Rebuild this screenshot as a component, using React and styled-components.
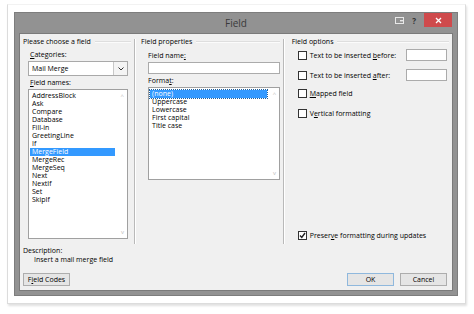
import React from 'react';
import styled, { createGlobalStyle } from 'styled-components';

const GlobalStyle = createGlobalStyle`
  html, body {
    margin: 0;
    background: #fff;
  }
  body {
    font-family: "Open Sans", "Noto Sans", sans-serif;
    font-size: 7px;
    color: #000;
  }
`;

const fieldNames = [
  'AddressBlock', 'Ask', 'Compare', 'Database', 'Fill-in', 'GreetingLine', 'If',
  'MergeField', 'MergeRec', 'MergeSeq', 'Next', 'NextIf', 'Set', 'SkipIf',
];
const formats = ['(none)', 'Uppercase', 'Lowercase', 'First capital', 'Title case'];

function App() {
  return (
    <>
      <GlobalStyle />
      <Page>
        <Frame>
          <Dialog>
            <TitleBar>
              <Title>Field</Title>
              <TitleTools>
                <svg width="9" height="7" viewBox="0 0 9 7">
                  <rect x="0.5" y="0.5" width="8" height="6" fill="none" stroke="#e8e8e8" />
                  <rect x="5" y="3" width="3" height="1.4" fill="#e8e8e8" />
                </svg>
                <Help>?</Help>
                <CloseBtn>
                  <svg width="7" height="7" viewBox="0 0 7 7">
                    <path d="M1 1 L6 6 M6 1 L1 6" stroke="#fff" strokeWidth="1.3" />
                  </svg>
                </CloseBtn>
              </TitleTools>
            </TitleBar>
            <Body>
              <Columns>
                <Column $width={113}>
                  <GroupTitle>Please choose a field</GroupTitle>
                  <Label $top={4}><u>C</u>ategories:</Label>
                  <Select>
                    <span>Mail Merge</span>
                    <DropBtn>
                      <svg width="6" height="4" viewBox="0 0 6 4">
                        <path d="M0.5 0.5 L3 3 L5.5 0.5" fill="none" stroke="#333" strokeWidth="1" />
                      </svg>
                    </DropBtn>
                  </Select>
                  <Label $top={2}><u>F</u>ield names:</Label>
                  <ListBox $height={150}>
                    {fieldNames.map((n) => (
                      <Item key={n} $selected={n === 'MergeField'}>{n}</Item>
                    ))}
                    <ScrollArrow $up>^</ScrollArrow>
                    <ScrollArrow>v</ScrollArrow>
                  </ListBox>
                </Column>
                <Separator />
                <Column $width={149} $pad={5}>
                  <GroupTitle>Field properties</GroupTitle>
                  <Label $top={5} $indent={7}>Field name<u>:</u></Label>
                  <TextInput $width={132} />
                  <Label $top={2} $indent={7}>Forma<u>t</u>:</Label>
                  <ListBox $height={93} $width={132}>
                    {formats.map((f, i) => (
                      <Item key={f} $selected={i === 0} $wide>{f}</Item>
                    ))}
                    <ScrollArrow $up>^</ScrollArrow>
                    <ScrollArrow>v</ScrollArrow>
                  </ListBox>
                </Column>
                <Separator />
                <Column $width={170} $pad={7}>
                  <GroupTitle>Field options</GroupTitle>
                  <OptionRow $top={3}>
                    <Check />
                    <OptionText>Text to be inserted <u>b</u>efore:</OptionText>
                    <SmallInput />
                  </OptionRow>
                  <OptionRow $top={8}>
                    <Check />
                    <OptionText>Text to be inserted <u>a</u>fter:</OptionText>
                    <SmallInput />
                  </OptionRow>
                  <OptionRow $top={6}>
                    <Check />
                    <OptionText><u>M</u>apped field</OptionText>
                  </OptionRow>
                  <OptionRow $top={8}>
                    <Check />
                    <OptionText>V<u>e</u>rtical formatting</OptionText>
                  </OptionRow>
                  <Spacer />
                  <OptionRow>
                    <Check $checked>
                      <svg width="7" height="7" viewBox="0 0 7 7">
                        <path d="M1 3.5 L2.8 5.5 L6 1" fill="none" stroke="#222" strokeWidth="1.4" />
                      </svg>
                    </Check>
                    <OptionText>Preser<u>v</u>e formatting during updates</OptionText>
                  </OptionRow>
                </Column>
              </Columns>
              <Description>
                <div>Description:</div>
                <DescText>Insert a mail merge field</DescText>
              </Description>
              <Footer>
                <Button>F<u>i</u>eld Codes</Button>
                <Buttons>
                  <Button $default>OK</Button>
                  <Button>Cancel</Button>
                </Buttons>
              </Footer>
            </Body>
          </Dialog>
        </Frame>
      </Page>
    </>
  );
}

export default App;

const Page = styled.div`
  width: 474px;
  height: 314px;
  padding: 4px 0 0 7px;
  box-sizing: border-box;
`;

const Frame = styled.div`
  width: 459px;
  height: 300px;
  box-sizing: border-box;
  border: 1px solid #dcdcdc;
  border-top-color: #f2f2f2;
  box-shadow: 1px 2px 2px rgba(0, 0, 0, 0.12);
  padding: 8px 0 0 7px;
  background: #fff;
`;

const Dialog = styled.div`
  width: 442px;
  height: 282px;
  background: #929292;
  box-sizing: border-box;
  padding: 0 4px 4px 4px;
  display: flex;
  flex-direction: column;
  box-shadow: 0 0 0 1px #7d7d7d;
`;

const TitleBar = styled.div`
  height: 20px;
  position: relative;
  display: flex;
  align-items: center;
  justify-content: center;
`;

const Title = styled.div`
  font-family: "Open Sans", sans-serif;
  font-size: 10px;
  color: #3a3a3a;
`;

const TitleTools = styled.div`
  position: absolute;
  right: 1px;
  top: 0;
  display: flex;
  align-items: center;
  gap: 8px;
`;

const Help = styled.span`
  font-family: "Open Sans", sans-serif;
  font-weight: bold;
  font-size: 8px;
  color: #333;
`;

const CloseBtn = styled.div`
  width: 28px;
  height: 14px;
  background: #cf4a4c;
  display: flex;
  align-items: center;
  justify-content: center;
`;

const Body = styled.div`
  flex: 1;
  background: #f0f0f0;
  border: 1px solid #7a7a7a;
  display: flex;
  flex-direction: column;
  padding: 3px 0 0 3px;
`;

const Columns = styled.div`
  display: flex;
  height: 207px;
`;

const Column = styled.div`
  width: ${(p) => p.$width}px;
  padding-left: ${(p) => p.$pad || 0}px;
  box-sizing: border-box;
  display: flex;
  flex-direction: column;
  padding-bottom: 3px;
`;

const Separator = styled.div`
  width: 1px;
  border-right: 1px solid #fff;
  background: #b9b9b9;
  margin-top: 2px;
`;

const GroupTitle = styled.div`
  line-height: 9px;
  display: flex;
  align-items: center;
  gap: 4px;

  &::after {
    content: '';
    flex: 1;
    height: 1px;
    background: #dedede;
    border-bottom: 1px solid #fbfbfb;
    margin-right: 3px;
  }
`;

const Label = styled.div`
  margin-top: ${(p) => p.$top || 0}px;
  padding-left: ${(p) => p.$indent ?? 7}px;
  line-height: 9px;

  u {
    text-decoration-thickness: 0.5px;
  }
`;

const Select = styled.div`
  margin: 2px 0 0 5px;
  width: 100px;
  height: 15px;
  box-sizing: border-box;
  border: 1px solid #a9a9a9;
  background: #fff;
  display: flex;
  align-items: center;
  padding-left: 3px;
  justify-content: space-between;
`;

const DropBtn = styled.div`
  width: 13px;
  height: 13px;
  border-left: 1px solid #c8c8c8;
  background: #f4f4f4;
  display: flex;
  align-items: center;
  justify-content: center;
`;

const ListBox = styled.div`
  position: relative;
  margin: 2px 0 0 ${(p) => (p.$width ? 7 : 5)}px;
  width: ${(p) => p.$width || 100}px;
  height: ${(p) => p.$height}px;
  box-sizing: border-box;
  border: 1px solid #a0a0a0;
  background: #fff;
  padding: 2px 12px 0 1px;
`;

const Item = styled.div`
  line-height: 8px;
  height: 8px;
  padding-left: 2px;
  background: ${(p) => (p.$selected ? '#3399ff' : 'transparent')};
  color: ${(p) => (p.$selected ? '#fff' : '#000')};
  outline: ${(p) => (p.$selected && p.$wide ? '1px dotted #1a5fa0' : 'none')};
`;

const ScrollArrow = styled.span`
  position: absolute;
  right: 3px;
  ${(p) => (p.$up ? 'top: 3px;' : 'bottom: 3px;')}
  font-size: 6px;
  line-height: 6px;
  color: #c0c0c0;
`;

const TextInput = styled.div`
  margin: 2px 0 0 7px;
  width: ${(p) => p.$width}px;
  height: 12px;
  box-sizing: border-box;
  border: 1px solid #ababab;
  background: #fff;
`;

const OptionRow = styled.div`
  display: flex;
  align-items: center;
  margin-top: ${(p) => p.$top || 0}px;
  padding-left: 6px;
  height: 12px;
`;

const Check = styled.div`
  width: 9px;
  height: 9px;
  box-sizing: border-box;
  border: 1px solid #333;
  background: #fff;
  margin-right: 3px;
  display: flex;
  align-items: center;
  justify-content: center;
`;

const OptionText = styled.span`
  flex: 1;
  white-space: nowrap;
`;

const SmallInput = styled.div`
  width: 41px;
  height: 12px;
  box-sizing: border-box;
  border: 1px solid #ababab;
  background: #fff;
  margin-right: 5px;
`;

const Spacer = styled.div`
  flex: 1;
`;

const Description = styled.div`
  line-height: 9px;
  margin-top: 2px;
`;

const DescText = styled.div`
  padding-left: 11px;
`;

const Footer = styled.div`
  display: flex;
  justify-content: space-between;
  align-items: flex-end;
  margin-top: 9px;
  padding-right: 5px;
`;

const Buttons = styled.div`
  display: flex;
  gap: 6px;
`;

const Button = styled.div`
  width: 47px;
  height: 13px;
  box-sizing: border-box;
  border: 1px solid ${(p) => (p.$default ? '#8fb8dd' : '#adadad')};
  background: #e5e5e5;
  display: flex;
  align-items: center;
  justify-content: center;
  line-height: 9px;
`;
